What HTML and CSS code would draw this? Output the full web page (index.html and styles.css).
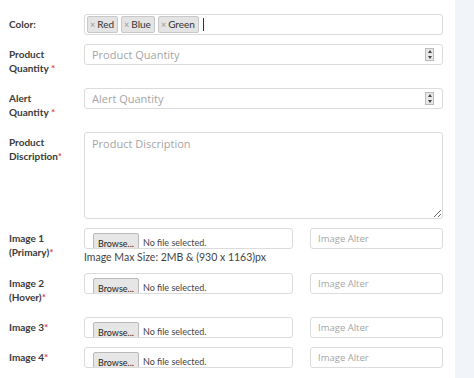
FILE: index.html
```html
<!DOCTYPE html>
<html>
<head>
	<title>Add Product</title>
	<link rel="stylesheet" href="styles.css">
</head>
<body>
	<div class="page">
		<!-- Product Form -->
		<form class="product-form">
			<div class="row">
				<label class="lbl">Color:</label>
				<div class="field">
					<div class="tags-input">
						<span class="tag"><span class="tag-x">&times;</span>Red</span>
						<span class="tag"><span class="tag-x">&times;</span>Blue</span>
						<span class="tag"><span class="tag-x">&times;</span>Green</span>
						<span class="caret"></span>
					</div>
				</div>
			</div>

			<div class="row">
				<label class="lbl">Product Quantity <span class="req">*</span></label>
				<div class="field">
					<div class="num-box">
						<input type="text" placeholder="Product Quantity">
						<span class="spin"><i class="up"></i><i class="down"></i></span>
					</div>
				</div>
			</div>

			<div class="row">
				<label class="lbl">Alert Quantity <span class="req">*</span></label>
				<div class="field">
					<div class="num-box">
						<input type="text" placeholder="Alert Quantity">
						<span class="spin"><i class="up"></i><i class="down"></i></span>
					</div>
				</div>
			</div>

			<div class="row">
				<label class="lbl">Product Discription<span class="req">*</span></label>
				<div class="field">
					<textarea placeholder="Product Discription"></textarea>
				</div>
			</div>

			<div class="row">
				<label class="lbl">Image 1 (Primary)<span class="req">*</span></label>
				<div class="field">
					<div class="img-pair">
						<div class="file-box"><span class="browse">Browse...</span><span class="no-file">No file selected.</span></div>
						<input type="text" class="alt-input" placeholder="Image Alter">
					</div>
					<p class="hint">Image Max Size: 2MB &amp; (930 x 1163)px</p>
				</div>
			</div>

			<div class="row">
				<label class="lbl">Image 2 (Hover)<span class="req">*</span></label>
				<div class="field">
					<div class="img-pair">
						<div class="file-box"><span class="browse">Browse...</span><span class="no-file">No file selected.</span></div>
						<input type="text" class="alt-input" placeholder="Image Alter">
					</div>
				</div>
			</div>

			<div class="row">
				<label class="lbl">Image 3<span class="req">*</span></label>
				<div class="field">
					<div class="img-pair">
						<div class="file-box"><span class="browse">Browse...</span><span class="no-file">No file selected.</span></div>
						<input type="text" class="alt-input" placeholder="Image Alter">
					</div>
				</div>
			</div>

			<div class="row">
				<label class="lbl">Image 4<span class="req">*</span></label>
				<div class="field">
					<div class="img-pair">
						<div class="file-box"><span class="browse">Browse...</span><span class="no-file">No file selected.</span></div>
						<input type="text" class="alt-input" placeholder="Image Alter">
					</div>
				</div>
			</div>
		</form>

		<aside class="side"></aside>
	</div>
</body>
</html>
```

FILE: styles.css
```css
body {
	font-family: Lato, "Liberation Sans", sans-serif;
	margin: 0;
	background: #fff;
	color: #333;
}

.page {
	display: flex;
	min-height: 378px;
}

.product-form {
	flex: 1;
	min-width: 0;
	padding: 14px 12px 0 9px;
}

.side {
	width: 19px;
	flex-shrink: 0;
	background-color: #f1f5f9;
}

.row {
	display: flex;
	margin-bottom: 9px;
}

.lbl {
	width: 75px;
	flex-shrink: 0;
	box-sizing: border-box;
	padding: 3px 17px 4px 0;
	font-size: 10px;
	font-weight: bold;
	line-height: 14px;
	color: #3a3a3a;
}

.req {
	color: #e0474c;
}

.field {
	flex: 1;
	min-width: 0;
}

input, textarea {
	font-family: "Open Sans", Lato, sans-serif;
	font-size: 11px;
	color: #333;
}

input::placeholder, textarea::placeholder {
	color: #a5a5a5;
}

/* tags */
.tags-input {
	height: 21px;
	box-sizing: border-box;
	border: 1px solid #dcdcdc;
	border-radius: 3px;
	display: flex;
	align-items: center;
	gap: 3px;
	padding: 0 2px;
}

.tag {
	height: 15px;
	line-height: 15px;
	background-color: #e4e4e4;
	border: 1px solid #c8c8c8;
	border-radius: 2px;
	padding: 0 3px 0 2px;
	font-size: 10px;
	color: #333;
}

.tag-x {
	color: #999;
	font-size: 9px;
	margin-right: 2px;
}

.caret {
	width: 1px;
	height: 13px;
	background: #333;
	margin-left: 1px;
}

/* number inputs */
.num-box {
	height: 21px;
	box-sizing: border-box;
	border: 1px solid #dcdcdc;
	border-radius: 3px;
	display: flex;
	align-items: center;
	padding: 0 8px 0 7px;
}

.num-box input {
	flex: 1;
	min-width: 0;
	border: none;
	outline: none;
	padding: 0;
	height: 18px;
	background: transparent;
}

.spin {
	width: 7px;
	height: 11px;
	border: 1px solid #bbb;
	background: #e8e8e8;
	display: flex;
	flex-direction: column;
	align-items: center;
	justify-content: space-around;
}

.spin i {
	width: 0;
	height: 0;
	border-left: 2px solid transparent;
	border-right: 2px solid transparent;
}

.spin .up {
	border-bottom: 3px solid #444;
}

.spin .down {
	border-top: 3px solid #444;
}

textarea {
	display: block;
	width: 100%;
	height: 87px;
	box-sizing: border-box;
	border: 1px solid #dcdcdc;
	border-radius: 3px;
	padding: 3px 7px;
	margin: 0;
	resize: vertical;
	outline: none;
}

/* image rows */
.img-pair {
	display: flex;
	gap: 17px;
}

.file-box {
	width: 209px;
	flex-shrink: 0;
	height: 21px;
	box-sizing: border-box;
	border: 1px solid #dcdcdc;
	border-radius: 3px;
	padding: 4px 0 0 8px;
	overflow: hidden;
	display: flex;
	align-items: flex-start;
	font-size: 9px;
}

.browse {
	height: 22px;
	line-height: 20px;
	box-sizing: border-box;
	padding: 0 4px;
	background-color: #e6e6e6;
	border: 1px solid #b9b9b9;
	border-radius: 2px;
	color: #222;
}

.no-file {
	line-height: 20px;
	margin-left: 4px;
	color: #444;
}

.alt-input {
	flex: 1;
	width: 0;
	height: 21px;
	box-sizing: border-box;
	border: 1px solid #dcdcdc;
	border-radius: 3px;
	padding: 0 7px;
	outline: none;
	font-size: 9.5px;
}

.hint {
	margin: 2px 0 0;
	font-size: 10.5px;
	line-height: 13px;
	color: #444;
}
```
